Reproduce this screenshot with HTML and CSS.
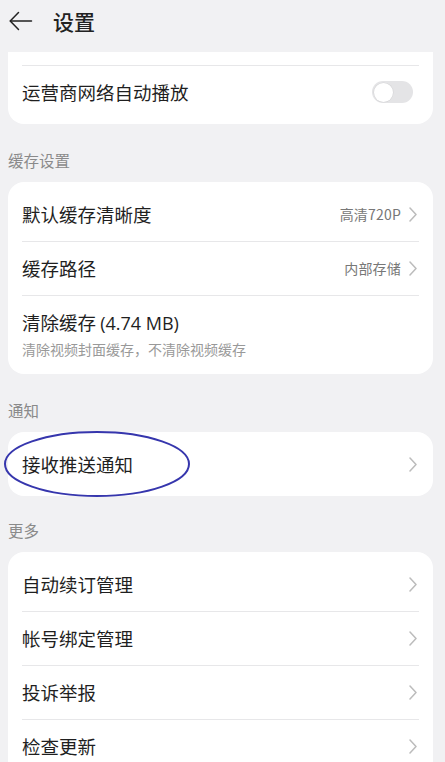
FILE: index.html
```html
<!DOCTYPE html>
<html lang="zh-CN">
<head>
<meta charset="utf-8">
<title>设置</title>
<link rel="stylesheet" href="styles.css">
</head>
<body>
<div class="page">
  <header class="topbar">
    <svg class="back" width="24" height="20" viewBox="0 0 24 20" fill="none" stroke="#222" stroke-width="1.5" stroke-linecap="round" stroke-linejoin="round">
      <path d="M22.5 10H1.5"/>
      <path d="M9.5 1.5L1.2 10L9.5 18.5"/>
    </svg>
    <h1 class="title">设置</h1>
  </header>

  <section class="card card-cut">
    <div class="stub"></div>
    <div class="row row-line">
      <span class="label">运营商网络自动播放</span>
      <span class="switch"><span class="knob"></span></span>
    </div>
  </section>

  <div class="section-label">缓存设置</div>
  <section class="card">
    <div class="row">
      <span class="label">默认缓存清晰度</span>
      <span class="right"><span class="value">高清720P</span><svg class="chev" width="8" height="15" viewBox="0 0 8 15" fill="none" stroke="#bcbcbc" stroke-width="1.5" stroke-linecap="round" stroke-linejoin="round"><path d="M1 1l6 6.5L1 14"/></svg></span>
    </div>
    <div class="row">
      <span class="label">缓存路径</span>
      <span class="right"><span class="value">内部存储</span><svg class="chev" width="8" height="15" viewBox="0 0 8 15" fill="none" stroke="#bcbcbc" stroke-width="1.5" stroke-linecap="round" stroke-linejoin="round"><path d="M1 1l6 6.5L1 14"/></svg></span>
    </div>
    <div class="row row-tall">
      <span class="label">清除缓存 <span class="latin">(4.74 MB)</span></span>
      <span class="sub">清除视频封面缓存，不清除视频缓存</span>
    </div>
  </section>

  <div class="section-label">通知</div>
  <section class="card">
    <div class="row">
      <span class="label">接收推送通知</span>
      <span class="right"><svg class="chev" width="8" height="15" viewBox="0 0 8 15" fill="none" stroke="#bcbcbc" stroke-width="1.5" stroke-linecap="round" stroke-linejoin="round"><path d="M1 1l6 6.5L1 14"/></svg></span>
    </div>
  </section>

  <div class="section-label section-label-tight">更多</div>
  <section class="card">
    <div class="row">
      <span class="label">自动续订管理</span>
      <span class="right"><svg class="chev" width="8" height="15" viewBox="0 0 8 15" fill="none" stroke="#bcbcbc" stroke-width="1.5" stroke-linecap="round" stroke-linejoin="round"><path d="M1 1l6 6.5L1 14"/></svg></span>
    </div>
    <div class="row">
      <span class="label">帐号绑定管理</span>
      <span class="right"><svg class="chev" width="8" height="15" viewBox="0 0 8 15" fill="none" stroke="#bcbcbc" stroke-width="1.5" stroke-linecap="round" stroke-linejoin="round"><path d="M1 1l6 6.5L1 14"/></svg></span>
    </div>
    <div class="row">
      <span class="label">投诉举报</span>
      <span class="right"><svg class="chev" width="8" height="15" viewBox="0 0 8 15" fill="none" stroke="#bcbcbc" stroke-width="1.5" stroke-linecap="round" stroke-linejoin="round"><path d="M1 1l6 6.5L1 14"/></svg></span>
    </div>
    <div class="row">
      <span class="label">检查更新</span>
      <span class="right"><svg class="chev" width="8" height="15" viewBox="0 0 8 15" fill="none" stroke="#bcbcbc" stroke-width="1.5" stroke-linecap="round" stroke-linejoin="round"><path d="M1 1l6 6.5L1 14"/></svg></span>
    </div>
  </section>

  <svg class="mark" width="190" height="70" viewBox="0 0 190 70" fill="none">
    <ellipse cx="94" cy="34" rx="92" ry="32" stroke="#3636ad" stroke-width="2"/>
  </svg>
</div>
</body>
</html>
```

FILE: styles.css
```css
html, body {
  margin: 0;
  padding: 0;
  background: #f1f1f3;
}

body {
  font-family: "Noto Sans CJK SC", "Noto Sans", sans-serif;
  color: #1f1f1f;
  width: 445px;
  height: 762px;
  overflow: hidden;
}

.page {
  position: relative;
  padding: 0 12px 0 8px;
}

.topbar {
  height: 52px;
  display: flex;
  align-items: flex-start;
  padding-top: 11px;
  box-sizing: border-box;
}

.back {
  margin-left: 1px;
  display: block;
}

.title {
  margin: 0 0 0 20px;
  font-size: 21px;
  font-weight: 500;
  line-height: 20px;
  color: #222;
}

.card {
  background: #fff;
  border-radius: 16px;
  padding: 5px 0;
}

.card-cut {
  border-radius: 0 0 16px 16px;
  padding-top: 0;
}

.stub {
  height: 13px;
}

.row {
  height: 54px;
  display: flex;
  align-items: center;
  justify-content: space-between;
  padding: 0 16px 0 14px;
}

.row + .row,
.row-line {
  background: linear-gradient(#e7e7e9, #e7e7e9) no-repeat;
  background-size: calc(100% - 28px) 1px;
  background-position: 14px 0;
}

.label {
  font-size: 18.5px;
  line-height: 24px;
  color: #1f1f1f;
}

.latin {
  font-family: "Open Sans", "Noto Sans", sans-serif;
  font-size: 18px;
}

.right {
  display: flex;
  align-items: center;
  gap: 8px;
}

.value {
  font-size: 14px;
  line-height: 18px;
  color: #777;
  letter-spacing: 0.2px;
}

.chev {
  display: block;
}

.row-tall {
  height: auto;
  flex-direction: column;
  align-items: flex-start;
  justify-content: flex-start;
  padding: 15px 16px 11px 14px;
}

.sub {
  margin-top: 5px;
  font-size: 14px;
  line-height: 18px;
  color: #999;
}

.switch {
  width: 41px;
  height: 22px;
  border-radius: 11px;
  background: #e4e4e6;
  display: flex;
  align-items: center;
  padding: 0 1.5px;
  box-sizing: border-box;
  margin-right: 4px;
}

.knob {
  width: 19px;
  height: 19px;
  border-radius: 50%;
  background: #fff;
  box-shadow: 0 0 0 0.6px #d6d6d8;
}

.section-label {
  padding: 26px 0 12px 0;
  font-size: 15.5px;
  line-height: 20px;
  color: #8a8a8a;
}

.section-label-tight {
  padding-top: 24px;
}

.mark {
  position: absolute;
  left: 3px;
  top: 430px;
}
```
